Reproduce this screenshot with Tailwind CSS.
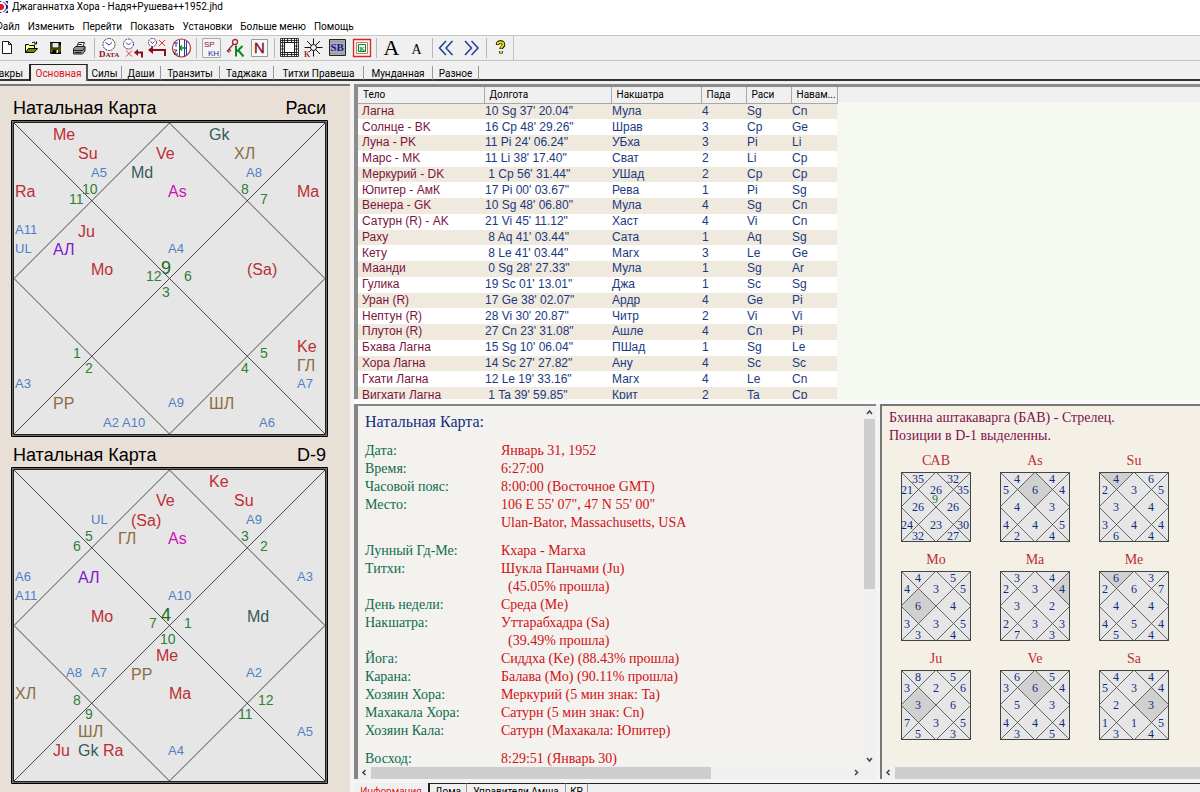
<!DOCTYPE html>
<html lang="ru">
<head>
    <meta charset="UTF-8">
    <meta name="viewport" content="width=device-width, initial-scale=1.0">
    <title>Джаганнатха Хора - Надя+Рушева++1952.jhd</title>
    <script src="https://cdn.jsdelivr.net/npm/@tailwindcss/browser@4"></script>
</head>
<body class="h-screen overflow-hidden flex flex-col bg-[#f0f0f0] text-black font-[Roboto,sans-serif]">
    <!-- Title bar -->
    <header class="flex items-center gap-1 h-4 pb-[2px] bg-white text-[10px] leading-3 whitespace-nowrap">
        <svg class="w-2 h-3" viewBox="0 0 8 12">
            <path d="M0 0h8v12H0z" fill="#1c1c8c" />
            <path d="M0 2l4-2M0 10l4 2M4 0l4 4M4 12l4-4" stroke="#fff" stroke-width="1.5" />
            <circle cx="1" cy="6" r="5" fill="#fff" />
            <circle cx="1" cy="6" r="3" fill="#e8141c" />
        </svg>
        <h1>Джаганнатха Хора - Надя+Рушева++1952.jhd</h1>
    </header>

    <!-- Menu -->
    <nav class="flex items-center gap-2 h-[19px] pt-[2px] bg-white text-[10px] leading-3 whitespace-nowrap">
        <button type="button" class="-ml-[5px]">Файл</button>
        <button type="button">Изменить</button>
        <button type="button">Перейти</button>
        <button type="button">Показать</button>
        <button type="button">Установки</button>
        <button type="button">Больше меню</button>
        <button type="button">Помощь</button>
    </nav>

    <!-- Toolbar -->
    <div class="h-[26px] border-y border-[#c4c4c4]">
        <div class="-ml-[5px] flex items-center h-full w-[519px] border-r border-[#c4c4c4]">
            <button type="button" aria-label="Новый" class="w-6 flex justify-center">
                <svg class="size-5" viewBox="0 0 20 20" fill="#fff" stroke="#000"><path d="M5.500 3.500h6l3 3v9h-9zM11.500 3.500v3h3" stroke-width=".9" /></svg>
            </button>
            <button type="button" aria-label="Открыть" class="w-6 flex justify-center">
                <svg class="size-5" viewBox="0 0 20 20" stroke="#000"><path d="M4.500 14.500v-8h3l1 1h5v3" fill="#ffff8c" /><path d="M4.500 14.500l3-4h9l-3.500 4z" fill="#808000" /><path d="M11 5c1.500-1.500 3-1 4 .5M15.500 3.500v2.500h-2.500" fill="none" /></svg>
            </button>
            <button type="button" aria-label="Сохранить" class="w-6 flex justify-center">
                <svg class="size-5" viewBox="0 0 20 20"><path d="M5 4h11v12H6l-1-1z" fill="#000" /><path d="M7.500 5h6v4.500h-6z" fill="#e8e8e8" /><path d="M6 5v9h1v-3h7v3h1V7" stroke="#808000" fill="none" /><path d="M11.500 12h1.500v3h-1.500z" fill="#fff" /></svg>
            </button>
            <button type="button" aria-label="Печать" class="w-6 flex justify-center">
                <svg class="size-5" viewBox="0 0 20 20" stroke="#222"><path d="M7.500 9.500l2-5h6l-2 5z" fill="#fff" /><path d="M4.500 10.500l2-2h9.500v4.500l-2.500 3h-9z" fill="#909090" /><path d="M4.500 12.500h9l2.500-3M6 14.500h6M9 6.500h4" fill="none" /></svg>
            </button>
            <span class="w-[6px] h-5 flex justify-center"><i class="w-px bg-[#b8b8b8]"></i></span>
            <button type="button" aria-label="Данные" class="w-6 flex justify-center">
                <svg class="w-6 h-5" viewBox="0 0 24 20"><circle cx="12" cy="6.500" r="6" fill="#fff" stroke="#333" stroke-dasharray="2 .8" /><path d="M8.500 4.500l3.500 2.500 3-2.500" fill="none" stroke="#23f" /><text x="2" y="19" font-family="Liberation Serif, serif" font-weight="bold" font-size="9" fill="#8b0f1c">D<tspan font-size="7">ATA</tspan></text></svg>
            </button>
            <button type="button" aria-label="Вернуть время" class="w-6 flex justify-center">
                <svg class="w-6 h-5" viewBox="0 0 24 20"><circle cx="7.500" cy="6" r="5" fill="#fff" stroke="#333" stroke-dasharray="2 .8" /><path d="M5 4.500L7.500 7 10 4.500" fill="none" stroke="#23f" /><path d="M5 12.500l6 6M11 12.500l-6 6" stroke="#f03030" /><path d="M13 14.500l4-3.500v2.500h5v6h-2v-4h-3v2.500z" fill="#8b0f1c" /></svg>
            </button>
            <button type="button" aria-label="Удалить время" class="w-6 flex justify-center">
                <svg class="w-6 h-5" viewBox="0 0 24 20"><circle cx="7.500" cy="4.500" r="4" fill="#fff" stroke="#333" stroke-dasharray="2 .8" /><path d="M5.500 3.500l2 2 2-2" fill="none" stroke="#23f" /><path d="M14 2l6 6M20 2l-6 6" stroke="#f03030" /><path d="M3 12l5-4v3h13v7h-2v-5H8v3z" fill="#8b0f1c" /></svg>
            </button>
            <button type="button" aria-label="Транзит" class="w-6 flex justify-center">
                <svg class="w-6 h-5" viewBox="0 0 24 20"><circle cx="12.500" cy="10" r="9" fill="#fff" stroke="#b02a34" stroke-width="1.200" /><path d="M10.500 2v16M15.500 2v16M17.500 3v14M5 5h4M7 5v4" stroke="#2a35a0" fill="none" /><path d="M5 12h3l-3 4h4" stroke="#333" fill="none" /><path d="M10 10h7M13 7.500L10.500 10l2.500 2.500" stroke="#0a8a20" stroke-width="1.500" fill="none" /></svg>
            </button>
            <span class="w-[6px] h-5 flex justify-center"><i class="w-px bg-[#b8b8b8]"></i></span>
            <button type="button" aria-label="SP KH" class="w-6 flex justify-center">
                <svg class="w-6 h-5" viewBox="0 0 24 20"><path d="M3.500.5h18v19h-18z" fill="#f4f4f4" stroke="#aaa" /><text x="5" y="8.500" font-family="Liberation Sans, sans-serif" font-size="8" fill="#8b0f1c">SP</text><text x="9" y="17.500" font-family="Liberation Sans, sans-serif" font-size="8" fill="#2224a8">KH</text></svg>
            </button>
            <button type="button" aria-label="Ключ" class="w-6 flex justify-center">
                <svg class="w-6 h-5" viewBox="0 0 24 20"><circle cx="12" cy="4" r="2.500" fill="none" stroke="#a02a30" stroke-width="1.300" /><path d="M10.500 6L4 13.500M6 11l2 2M4.500 12.500l2 2" stroke="#a02a30" stroke-width="1.300" fill="none" /><path d="M13 7.500v11M19.500 8L14 13.500M15.500 12.500l5 6" stroke="#0a8a20" stroke-width="2" fill="none" /></svg>
            </button>
            <button type="button" aria-label="N" class="w-6 flex justify-center">
                <svg class="w-6 h-5" viewBox="0 0 24 20"><path d="M4.500 1.500h16v17h-16z" fill="#f8f8f8" stroke="#999" /><text x="7" y="15" font-family="Liberation Sans, sans-serif" font-size="15" fill="#8b0f1c" stroke="#8b0f1c" stroke-width=".4">N</text></svg>
            </button>
            <span class="w-[6px] h-5 flex justify-center"><i class="w-px bg-[#b8b8b8]"></i></span>
            <button type="button" aria-label="Сетка" class="w-6 flex justify-center">
                <svg class="w-6 h-5" viewBox="0 0 24 20"><path d="M3.500.5h18v18h-18zM7.500 4.500h10v10h-10zM3.500 2.500h18M3.500 4.500h18M3.500 14.500h18M3.500 16.500h18M5.500.5v18M7.500.5v18M17.500.5v18M19.500.5v18M10.500.5v4M14.500.5v4M10.500 14.500v4M14.500 14.500v4M3.500 8h4M3.500 11h4M17.500 8h4M17.500 11h4" fill="none" stroke="#111" stroke-width=".8" /><path d="M8 5h9v9H8z" fill="#fff" /></svg>
            </button>
            <button type="button" aria-label="Солнце" class="w-6 flex justify-center">
                <svg class="w-6 h-5" viewBox="0 0 24 20" fill="none"><circle cx="12.500" cy="9.500" r="3" stroke="#111" /><path d="M12.500.5v6M12.500 12.500v6M3.500 9.500h6M15.500 9.500h6M6 3l4.500 4.500M14.500 11.500L19 16M19 3l-4.500 4.500M10.500 11.500L8 14" stroke="#111" /><text x="3" y="18.500" font-family="Liberation Serif, serif" font-weight="bold" font-size="8" fill="#a02a30">K</text></svg>
            </button>
            <button type="button" aria-label="SB" class="w-6 flex justify-center">
                <svg class="w-6 h-5" viewBox="0 0 24 20"><path d="M4.500 1.500h16v16h-16z" fill="#a9abb4" stroke="#222" /><path d="M5.500 3.500h14M5.500 15.500h14" stroke="#888" stroke-dasharray="1 1" /><text x="5.500" y="13" font-family="Liberation Serif, serif" font-weight="bold" font-size="11" fill="#15158c">SB</text></svg>
            </button>
            <button type="button" aria-label="K" class="w-6 flex justify-center">
                <svg class="w-6 h-5" viewBox="0 0 24 20"><g fill="#f6f6f6"><path d="M4.500 1.500h17v17h-17z" stroke="#e02020" stroke-width="1.300" /><path d="M7.500 4.500h11v11h-11z" stroke="#b07a70" /><path d="M9.500 6.500h7v7h-7z" stroke="#0a8a20" /></g><text x="10.500" y="12.500" font-family="Liberation Serif, serif" font-weight="bold" font-size="7" fill="#0a8a20">K</text></svg>
            </button>
            <span class="w-[6px] h-5 flex justify-center"><i class="w-px bg-[#b8b8b8]"></i></span>
            <button type="button" class="w-[25px] font-['Liberation_Serif',serif] font-medium text-[22px] leading-5">A</button>
            <button type="button" class="w-[25px] pt-1 font-['Liberation_Serif',serif] font-medium text-[14px] leading-5">A</button>
            <span class="w-[6px] h-5 flex justify-center"><i class="w-px bg-[#b8b8b8]"></i></span>
            <button type="button" aria-label="Назад" class="w-6 flex justify-center">
                <svg class="size-5" viewBox="0 0 20 20" fill="none" stroke="#1b3f8f" stroke-width="1.500"><path d="M9 3l-6.500 7L9 17M15.500 3L9 10l6.500 7" /></svg>
            </button>
            <button type="button" aria-label="Вперёд" class="w-6 flex justify-center">
                <svg class="size-5" viewBox="0 0 20 20" fill="none" stroke="#1b3f8f" stroke-width="1.500"><path d="M4 3l6.500 7L4 17M10.500 3l6.500 7-6.500 7" /></svg>
            </button>
            <span class="w-[6px] h-5 flex justify-center"><i class="w-px bg-[#b8b8b8]"></i></span>
            <button type="button" aria-label="Справка" class="w-6 flex justify-center">
                <svg class="size-5" viewBox="0 0 20 20" fill="none"><path d="M6.500 7c0-4 6-4 6 0 0 2-2.500 2-2.500 4M10 13v2.500" stroke="#000" stroke-width="3.400" /><path d="M6.500 6.500c0-3 6-3 6 0 0 2-2.500 2-2.500 4M10 13v2" stroke="#f4e400" stroke-width="1.800" /></svg>
            </button>
        </div>
    </div>

    <!-- Tabs -->
    <div class="flex items-end h-[20px] shrink-0 text-[10px] leading-3 whitespace-nowrap">
        <button type="button" class="w-[29px] h-[15px] pr-[6px] pt-[2px] flex justify-end border-b-2 border-[#333]"><span>Чакры</span></button>
        <button type="button" class="w-[59px] h-[17px] pt-[2px] border-t border-x-2 border-[#222] border-r-[#555] text-[#e0101c]">Основная</button>
        <button type="button" class="w-[34px] h-[15px] pt-[2px] border-b-2 border-b-[#333] border-r border-r-[#999]">Силы</button>
        <button type="button" class="w-[39px] h-[15px] pt-[2px] border-b-2 border-b-[#333] border-r border-r-[#999]">Даши</button>
        <button type="button" class="w-[59px] h-[15px] pt-[2px] border-b-2 border-b-[#333] border-r border-r-[#999]">Транзиты</button>
        <button type="button" class="w-[54px] h-[15px] pt-[2px] border-b-2 border-b-[#333] border-r border-r-[#999]">Таджака</button>
        <button type="button" class="w-[90px] h-[15px] pt-[2px] border-b-2 border-b-[#333] border-r border-r-[#999]">Титхи Правеша</button>
        <button type="button" class="w-[69px] h-[15px] pt-[2px] border-b-2 border-b-[#333] border-r border-r-[#999]">Мунданная</button>
        <button type="button" class="w-[46px] h-[15px] pt-[2px] border-b-2 border-b-[#333] border-r border-r-[#999]">Разное</button>
        <span class="flex-1 h-[15px] border-b-2 border-[#333]"></span>
    </div>

    <main class="flex-1 min-h-0 flex mt-[3px] bg-[#f4f4f4]">
        <!-- Charts -->
        <section class="w-[350px] shrink-0 border-t-2 border-[#7a7674] bg-[#e8dfd6] pl-[11px] pr-[22px] font-['Liberation_Sans',sans-serif] overflow-hidden">
            <div class="flex justify-between items-end h-[34px] px-[2px] text-[18px] leading-6">
                <h2>Натальная Карта</h2>
                <span>Раси</span>
            </div>
            <svg class="w-full block" viewBox="0 0 317 317" font-size="16">
                <defs>
                    <g id="frame">
                        <path d="M.5.5h316v316H.5z" fill="#e6e6e6" stroke="#000" />
                        <path d="M1.500 1.500h314v314h-314z" fill="none" stroke="#6c6866" />
                        <path d="M2.500 2.500h312v312h-312z" fill="none" stroke="#222" />
                        <path d="M3 3l311 311M314 3L3 314M158.500 3L3 158.500l155.500 155.500L314 158.500z" fill="none" stroke="#222" stroke-width=".8" />
                    </g>
                </defs>
                <use href="#frame" />
                <g fill="#bc2e34">
                    <text x="42" y="20">Me</text><text x="67" y="39">Su</text><text x="145" y="39">Ve</text>
                    <text x="4" y="77">Ra</text><text x="286" y="77">Ma</text><text x="67" y="117">Ju</text>
                    <text x="80" y="155">Mo</text><text x="236" y="155">(Sa)</text><text x="286" y="232">Ke</text>
                </g>
                <g fill="#335c5c"><text x="120" y="58">Md</text><text x="198" y="20">Gk</text></g>
                <text x="157" y="77" fill="#cc14b0">As</text>
                <text x="42" y="135" fill="#7a1ccc">АЛ</text>
                <g fill="#8e6c42">
                    <text x="223" y="39">ХЛ</text><text x="286" y="251">ГЛ</text><text x="42" y="289">РР</text><text x="198" y="289">ШЛ</text>
                </g>
                <g fill="#5080c4" font-size="13">
                    <text x="80" y="57">A5</text><text x="235" y="57">A8</text><text x="4" y="114">A11</text><text x="4" y="133">UL</text>
                    <text x="157" y="133">A4</text><text x="286" y="268">A7</text><text x="4" y="268">A3</text><text x="157" y="287">A9</text>
                    <text x="92" y="307">A2</text><text x="111" y="307">A10</text><text x="248" y="307">A6</text>
                </g>
                <g fill="#2e8038" font-size="14">
                    <text x="71" y="74">10</text><text x="58" y="84">11</text><text x="230" y="74">8</text><text x="249" y="84">7</text>
                    <text x="135" y="161">12</text><text x="173" y="161">6</text><text x="151" y="177">3</text><text x="62" y="238">1</text>
                    <text x="74" y="253">2</text><text x="249" y="238">5</text><text x="230" y="253">4</text>
                    <text x="150" y="154" font-size="18" fill="#1c6a24">9</text>
                </g>
            </svg>

            <div class="flex justify-between items-end h-[30px] px-[2px] text-[18px] leading-6">
                <h2>Натальная Карта</h2>
                <span>D-9</span>
            </div>
            <svg class="w-full block" viewBox="0 0 317 317" font-size="16">
                <use href="#frame" />
                <g fill="#bc2e34">
                    <text x="198" y="20">Ke</text><text x="145" y="39">Ve</text><text x="223" y="39">Su</text>
                    <text x="120" y="59">(Sa)</text><text x="80" y="155">Mo</text><text x="145" y="194">Me</text>
                    <text x="158" y="232">Ma</text><text x="42" y="289">Ju</text><text x="92" y="289">Ra</text>
                </g>
                <g fill="#335c5c"><text x="236" y="155">Md</text><text x="67" y="289">Gk</text></g>
                <text x="157" y="77" fill="#cc14b0">As</text>
                <text x="67" y="116" fill="#7a1ccc">АЛ</text>
                <g fill="#8e6c42">
                    <text x="107" y="77">ГЛ</text><text x="120" y="213">РР</text><text x="4" y="232">ХЛ</text><text x="67" y="270">ШЛ</text>
                </g>
                <g fill="#5080c4" font-size="13">
                    <text x="80" y="57">UL</text><text x="235" y="57">A9</text><text x="4" y="114">A6</text><text x="4" y="133">A11</text>
                    <text x="286" y="114">A3</text><text x="157" y="133">A10</text><text x="55" y="210">A8</text><text x="80" y="210">A7</text>
                    <text x="235" y="210">A2</text><text x="157" y="288">A4</text><text x="286" y="269">A5</text>
                </g>
                <g fill="#2e8038" font-size="14">
                    <text x="74" y="74">5</text><text x="62" y="84">6</text><text x="230" y="74">3</text><text x="249" y="84">2</text>
                    <text x="138" y="161">7</text><text x="173" y="161">1</text><text x="149" y="177">10</text><text x="62" y="238">8</text>
                    <text x="247" y="238">12</text><text x="74" y="252">9</text><text x="227" y="252">11</text>
                    <text x="150" y="154" font-size="18" fill="#1c6a24">4</text>
                </g>
            </svg>
        </section>

        <div class="flex-1 min-w-0 flex flex-col ml-1">
            <!-- Planets -->
            <section class="h-[315px] shrink-0 overflow-hidden border-t-3 border-l-4 border-[#8c8c8c] bg-[#f6f8f2]">
                <div class="bg-linear-to-b from-[#f0f0f0] from-[15px] to-transparent to-[15px]">
                    <table class="w-[479px] h-[316px] table-fixed border-collapse text-left text-[12px] text-[#1a3a80] font-['Liberation_Sans',sans-serif] whitespace-nowrap">
                        <colgroup>
                            <col class="w-[126px]"><col class="w-[127px]"><col class="w-[90px]"><col class="w-[45px]"><col class="w-[45px]"><col class="w-[46px]">
                        </colgroup>
                        <thead class="text-[10px] leading-[15px] text-black font-[Roboto,sans-serif]">
                            <tr class="h-4 *:border-r *:border-b *:border-[#a8a8a8] *:bg-[#f0f0f0] *:font-normal *:pl-[5px]">
                                <th>Тело</th><th>Долгота</th><th>Накшатра</th><th>Пада</th><th>Раси</th><th>Навам...</th>
                            </tr>
                        </thead>
                        <tbody class="leading-[15px] *:odd:bg-[#f0e9de] *:even:bg-white [&_td]:pl-px [&_td:first-child]:pl-1 [&_td:first-child]:text-[#7c1440]">
                            <tr><td>Лагна</td><td>10 Sg 37' 20.04"</td><td>Мула</td><td>4</td><td>Sg</td><td>Cn</td></tr>
                            <tr><td>Солнце - BK</td><td>16 Cp 48' 29.26"</td><td>Шрав</td><td>3</td><td>Cp</td><td>Ge</td></tr>
                            <tr><td>Луна - PK</td><td>11 Pi 24' 06.24"</td><td>УБха</td><td>3</td><td>Pi</td><td>Li</td></tr>
                            <tr><td>Марс - MK</td><td>11 Li 38' 17.40"</td><td>Сват</td><td>2</td><td>Li</td><td>Cp</td></tr>
                            <tr><td>Меркурий - DK</td><td>&nbsp;1 Cp 56' 31.44"</td><td>УШад</td><td>2</td><td>Cp</td><td>Cp</td></tr>
                            <tr><td>Юпитер - АмК</td><td>17 Pi 00' 03.67"</td><td>Рева</td><td>1</td><td>Pi</td><td>Sg</td></tr>
                            <tr><td>Венера - GK</td><td>10 Sg 48' 06.80"</td><td>Мула</td><td>4</td><td>Sg</td><td>Cn</td></tr>
                            <tr><td>Сатурн (R) - AK</td><td>21 Vi 45' 11.12"</td><td>Хаст</td><td>4</td><td>Vi</td><td>Cn</td></tr>
                            <tr><td>Раху</td><td>&nbsp;8 Aq 41' 03.44"</td><td>Сата</td><td>1</td><td>Aq</td><td>Sg</td></tr>
                            <tr><td>Кету</td><td>&nbsp;8 Le 41' 03.44"</td><td>Магх</td><td>3</td><td>Le</td><td>Ge</td></tr>
                            <tr><td>Маанди</td><td>&nbsp;0 Sg 28' 27.33"</td><td>Мула</td><td>1</td><td>Sg</td><td>Ar</td></tr>
                            <tr><td>Гулика</td><td>19 Sc 01' 13.01"</td><td>Джа</td><td>1</td><td>Sc</td><td>Sg</td></tr>
                            <tr><td>Уран (R)</td><td>17 Ge 38' 02.07"</td><td>Ардр</td><td>4</td><td>Ge</td><td>Pi</td></tr>
                            <tr><td>Нептун (R)</td><td>28 Vi 30' 20.87"</td><td>Читр</td><td>2</td><td>Vi</td><td>Vi</td></tr>
                            <tr><td>Плутон (R)</td><td>27 Cn 23' 31.08"</td><td>Ашле</td><td>4</td><td>Cn</td><td>Pi</td></tr>
                            <tr><td>Бхава Лагна</td><td>15 Sg 10' 06.04"</td><td>ПШад</td><td>1</td><td>Sg</td><td>Le</td></tr>
                            <tr><td>Хора Лагна</td><td>14 Sc 27' 27.82"</td><td>Ану</td><td>4</td><td>Sc</td><td>Sc</td></tr>
                            <tr><td>Гхати Лагна</td><td>12 Le 19' 33.16"</td><td>Магх</td><td>4</td><td>Le</td><td>Cn</td></tr>
                            <tr><td>Вигхати Лагна</td><td>&nbsp;1 Ta 39' 59.85"</td><td>Крит</td><td>2</td><td>Ta</td><td>Cp</td></tr>
                        </tbody>
                    </table>
                </div>
            </section>

            <div class="flex-1 min-h-0 flex gap-1 border-t-5 border-[#fafafa]">
                <!-- Birth details -->
                <section class="flex-1 min-w-0 flex flex-col border-t-2 border-l-4 border-[#858585] font-['Liberation_Serif',serif]">
                    <div class="flex-1 min-h-0 flex">
                        <div class="flex-1 overflow-hidden bg-[#f4f2ee] pl-[7px] pt-[6px] whitespace-nowrap">
                            <h2 class="text-[16px] leading-5 text-[#102c80]">Натальная Карта:</h2>
                            <dl class="mt-[10px] grid grid-cols-[136px_1fr] text-[14px] leading-[18px] text-[#d01014] [&_dt]:text-[#0c6c50]">
                                <dt>Дата:</dt><dd>Январь 31, 1952</dd>
                                <dt>Время:</dt><dd>6:27:00</dd>
                                <dt>Часовой пояс:</dt><dd>8:00:00 (Восточное GMT)</dd>
                                <dt>Место:</dt><dd>106 E 55' 07", 47 N 55' 00"<br>Ulan-Bator, Massachusetts, USA</dd>
                                <dt class="mt-[10px]">Лунный Гд-Ме:</dt><dd class="mt-[10px]">Кхара - Магха</dd>
                                <dt>Титхи:</dt><dd>Шукла Панчами (Ju)<br>&nbsp; (45.05% прошла)</dd>
                                <dt>День недели:</dt><dd>Среда (Me)</dd>
                                <dt>Накшатра:</dt><dd>Уттарабхадра (Sa)<br>&nbsp; (39.49% прошла)</dd>
                                <dt>Йога:</dt><dd>Сиддха (Ke) (88.43% прошла)</dd>
                                <dt>Карана:</dt><dd>Балава (Mo) (90.11% прошла)</dd>
                                <dt>Хозяин Хора:</dt><dd>Меркурий (5 мин знак: Ta)</dd>
                                <dt>Махакала Хора:</dt><dd>Сатурн (5 мин знак: Cn)</dd>
                                <dt>Хозяин Кала:</dt><dd>Сатурн (Махакала: Юпитер)</dd>
                                <dt class="mt-[10px]">Восход:</dt><dd class="mt-[10px]">8:29:51 (Январь 30)</dd>
                            </dl>
                        </div>
                        <div class="w-[13px] flex flex-col items-center bg-[#f0f0f0]">
                            <svg class="w-[13px] h-[13px]" viewBox="0 0 13 13" fill="none" stroke="#444" stroke-width="1.500"><path d="M4 8l2.500-3L9 8" /></svg>
                            <span class="w-[11px] h-[170px] bg-[#cdcdcd]"></span>
                            <svg class="w-[13px] h-[13px] mt-auto" viewBox="0 0 13 13" fill="none" stroke="#444" stroke-width="1.500"><path d="M4 5l2.500 3L9 5" /></svg>
                        </div>
                    </div>
                    <div class="h-[13px] shrink-0 flex items-center bg-[#f0f0f0] pr-[13px]">
                        <svg class="w-[13px] h-[13px]" viewBox="0 0 13 13" fill="none" stroke="#444" stroke-width="1.500"><path d="M7.500 4L5 6.500 7.500 9" /></svg>
                        <span class="w-[340px] h-3 bg-[#cdcdcd]"></span>
                        <svg class="w-[13px] h-[13px] ml-auto" viewBox="0 0 13 13" fill="none" stroke="#444" stroke-width="1.500"><path d="M5 4l2.500 2.500L5 9" /></svg>
                    </div>
                </section>

                <!-- Ashtakavarga -->
                <section class="w-[320px] shrink-0 flex flex-col border-t-2 border-l-2 border-[#777] font-['Liberation_Serif',serif]">
                    <div class="flex-1 min-h-0 overflow-hidden bg-[#f5f0e6] pl-[7px] pt-[3px]">
                        <h2 class="text-[14px] leading-[18px] text-[#7c1050] whitespace-nowrap">Бхинна аштакаварга (БАВ) - Стрелец.<br>Позиции в D-1 выделенны.</h2>
                        <div id="bav" class="mt-[7px] pl-3 grid grid-cols-[repeat(3,70px)] gap-x-[29px] gap-y-[9px]"></div>
                    </div>
                    <div class="h-[13px] shrink-0 flex items-center bg-[#f0f0f0]">
                        <svg class="w-[13px] h-[13px]" viewBox="0 0 13 13" fill="none" stroke="#444" stroke-width="1.500"><path d="M7.500 4L5 6.500 7.500 9" /></svg>
                        <span class="flex-1 h-3 bg-[#cdcdcd]"></span>
                    </div>
                </section>
            </div>

            <!-- Bottom tabs -->
            <div class="mt-1 h-[9px] shrink-0 flex overflow-hidden bg-[#f0f0f0] text-[10px] leading-3 whitespace-nowrap">
                <button type="button" class="w-[76px] flex justify-center pt-[3px] border-r-2 border-[#222] text-[#e0101c]">Информация</button>
                <button type="button" class="w-[37px] flex justify-center pt-[2px] border-t border-t-[#222] border-r border-r-[#999]">Дома</button>
                <button type="button" class="w-[99px] flex justify-center pt-[2px] border-t border-t-[#222] border-r border-r-[#999]">Управители Амша</button>
                <button type="button" class="w-[22px] flex justify-center pt-[2px] border-t border-t-[#222] border-r border-r-[#999]">КР</button>
                <span class="flex-1 border-t border-[#222]"></span>
            </div>
        </div>
    </main>

    <script>
        // house label positions: x (middle), y (baseline)
        const spots = [[17, 11], [52, 11], [6, 22], [35, 22], [62, 22], [17, 39], [52, 39], [6, 57], [35, 57], [62, 57], [17, 68], [52, 68]];
        const houses = {
            top: 'M35 0l17.500 17.500L35 35 17.500 17.500z',
            topLeft: 'M0 0h35L17.500 17.500z',
            left: 'M17.500 17.500L35 35 17.500 52.500 0 35z',
            right: 'M52.500 17.500L70 35 52.500 52.500 35 35z',
            rightUpper: 'M70 0v35L52.500 17.500z',
        };
        const charts = [
            ['САВ', [35, 32, 21, 26, 35, 26, 26, 24, 23, 30, 32, 27]],
            ['As', [4, 4, 5, 6, 4, 4, 3, 4, 4, 5, 2, 4], 'top'],
            ['Su', [4, 6, 2, 3, 5, 3, 4, 3, 4, 4, 6, 4], 'topLeft'],
            ['Mo', [4, 5, 4, 3, 5, 6, 4, 3, 3, 5, 3, 4], 'left'],
            ['Ma', [3, 4, 2, 3, 4, 3, 2, 2, 3, 3, 7, 3], 'rightUpper'],
            ['Me', [6, 3, 2, 6, 7, 4, 4, 4, 5, 4, 5, 4], 'topLeft'],
            ['Ju', [8, 5, 3, 2, 6, 3, 6, 7, 3, 5, 5, 3], 'left'],
            ['Ve', [6, 5, 3, 6, 4, 5, 3, 4, 4, 4, 3, 5], 'top'],
            ['Sa', [4, 4, 5, 3, 4, 2, 3, 1, 1, 5, 3, 4], 'right'],
        ];
        document.getElementById('bav').innerHTML = charts.map(([name, points, house]) => `
            <figure>
                <figcaption class="h-5 text-center text-[14px] leading-[18px] text-[#bc2e34]">${name}</figcaption>
                <svg class="block w-[70px] h-[70px] overflow-visible" viewBox="0 0 70 70" font-size="12" text-anchor="middle" fill="#102c80">
                    <path d="M0 0h70v70H0z" fill="#e6e6e6" />
                    ${house ? `<path d="${houses[house]}" fill="#d0d0d0" />` : ''}
                    <path d="M0 0l70 70M70 0L0 70M35 0L0 35l35 35 35-35z" fill="none" stroke="#444" stroke-width=".8" />
                    <path d="M.5.5h69v69H.5z" fill="none" stroke="#444" />
                    ${points.map((n, i) => `<text x="${spots[i][0]}" y="${spots[i][1]}">${n}</text>`).join('')}
                    ${house ? '' : '<text x="34" y="31" fill="#2e8038">9</text>'}
                </svg>
            </figure>`).join('');
    </script>
</body>
</html>
